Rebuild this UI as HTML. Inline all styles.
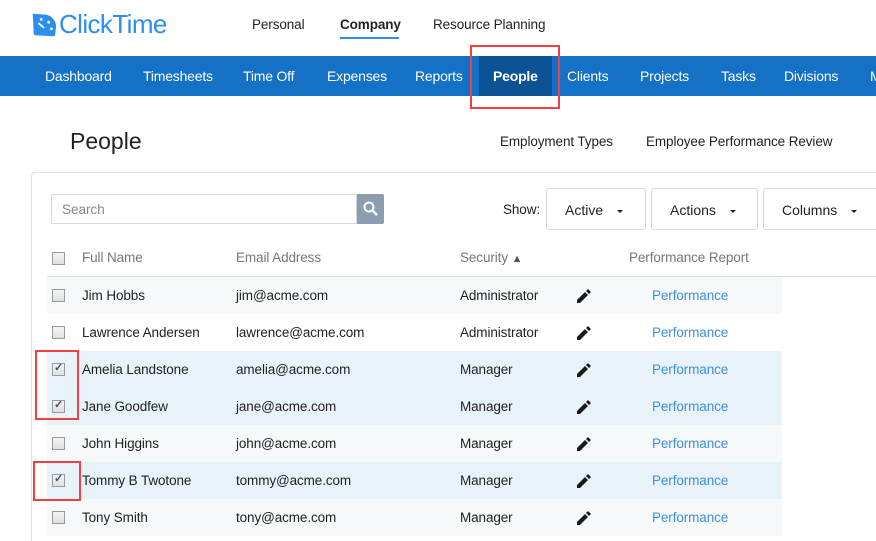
<!DOCTYPE html>
<html><head><meta charset="utf-8"><style>
*{margin:0;padding:0;box-sizing:border-box}
html,body{width:876px;height:541px;overflow:hidden}
body{background:#fff;font-family:"Liberation Sans",sans-serif;color:#222;position:relative}
.a{position:absolute;white-space:nowrap}
.nav{position:absolute;left:0;top:56px;width:876px;height:40px;background:#1471c5;overflow:hidden}
.nav span{position:absolute;top:12px;color:#fff;font-size:14px;letter-spacing:-0.2px}
.row{position:absolute;left:47px;width:735px;height:37px}
.cb{position:absolute;left:52px;width:13px;height:13px;border:1px solid #9a9a9a;background:linear-gradient(#f4f4f4,#e0e0e0)}
.cb.c::after{content:"✓";position:absolute;left:1px;top:-3px;font-size:11px;color:#3a4a9a;font-weight:bold}
.t{font-size:13.5px;color:#222;letter-spacing:-0.1px}
.p{font-size:13.5px;color:#3d8fe0;letter-spacing:-0.1px}
.h{font-size:13.5px;color:#777;letter-spacing:-0.1px}
.btn{position:absolute;top:188px;height:42px;border:1px solid #d5d9dd;border-radius:3px;font-size:14px;color:#222;padding:13px 0 0 18px;overflow:hidden}
.btn i{display:inline-block;border-left:3px solid transparent;border-right:3px solid transparent;border-top:3px solid #222;margin-left:14px;vertical-align:middle}
.red{position:absolute;border:2px solid #ee4242}
.pen{position:absolute;left:576px}
</style></head><body>
<svg class="a" style="left:30px;top:12px" width="28" height="26" viewBox="0 0 30 26"><path d="M3 2 Q2 1 4 1 L18 2 Q27 5 28 14 L27 23 Q27 25 25 25 L6 24 Q4 24 4 22 Z" fill="#2b8ef0"/><circle cx="12" cy="7" r="1.5" fill="#fff"/><circle cx="20" cy="10" r="1.5" fill="#fff"/><circle cx="23" cy="17" r="1.5" fill="#fff"/><path d="M9 11 L15 16" stroke="#fff" stroke-width="2"/></svg>
<div class="a" style="left:59px;top:9px;font-size:26px;color:#2b8ef0;letter-spacing:-0.6px">ClickTime</div>
<div class="a t" style="left:252px;top:17px">Personal</div>
<div class="a t" style="left:340px;top:17px;font-weight:bold">Company</div>
<div class="a" style="left:340px;top:37px;width:59px;height:2px;background:#2d8ee8"></div>
<div class="a t" style="left:433px;top:17px">Resource Planning</div>
<div class="nav">
<div class="a" style="left:479px;top:0;width:73px;height:40px;background:#0b5394"></div>
<span style="left:45px">Dashboard</span><span style="left:143px">Timesheets</span><span style="left:243px">Time Off</span><span style="left:327px">Expenses</span><span style="left:415px">Reports</span><span style="left:493px;font-weight:bold">People</span><span style="left:567px">Clients</span><span style="left:640px">Projects</span><span style="left:721px">Tasks</span><span style="left:784px">Divisions</span><span style="left:870px">M</span>
</div>
<div class="red" style="left:470px;top:45px;width:90px;height:64px"></div>
<div class="a" style="left:70px;top:128px;font-size:23px;color:#222">People</div>
<div class="a t" style="left:500px;top:134px">Employment Types</div>
<div class="a t" style="left:646px;top:134px">Employee Performance Review</div>
<div class="a" style="left:31px;top:172px;width:845px;height:369px;border:1px solid #dde2e6;border-right:none;border-bottom:none;border-radius:4px 0 0 0"></div>
<div class="a" style="left:51px;top:194px;width:306px;height:30px;border:1px solid #d5d9dd;border-radius:2px 0 0 2px"></div>
<div class="a" style="left:62px;top:202px;font-size:13.5px;color:#888">Search</div>
<div class="a" style="left:357px;top:194px;width:27px;height:30px;background:#8c9daf;border-radius:0 2px 2px 0"></div>
<svg class="a" style="left:362px;top:200px" width="17" height="17"><circle cx="7" cy="7" r="4.5" stroke="#fff" stroke-width="2" fill="none"/><path d="M10.5 10.5 L15 15" stroke="#fff" stroke-width="2.5"/></svg>
<div class="a t" style="left:503px;top:202px">Show:</div>
<div class="btn" style="left:546px;width:100px">Active<i></i></div>
<div class="btn" style="left:651px;width:107px">Actions<i></i></div>
<div class="btn" style="left:763px;width:113px;border-right:none;border-radius:3px 0 0 3px">Columns<i></i></div>
<div class="cb" style="top:252px"></div>
<div class="a h" style="left:82px;top:250px">Full Name</div>
<div class="a h" style="left:236px;top:250px">Email Address</div>
<div class="a h" style="left:460px;top:250px">Security <span style="font-size:11px;color:#555">▲</span></div>
<div class="a h" style="left:629px;top:250px">Performance Report</div>
<div class="a" style="left:47px;top:276px;width:829px;height:1px;background:#d9dee2"></div>

<div class="row" style="top:277px;background:#f6f9fa"></div>
<div class="row" style="top:314px;background:#fff"></div>
<div class="row" style="top:351px;background:#e8f3f9"></div>
<div class="row" style="top:388px;background:#e8f3f9"></div>
<div class="row" style="top:425px;background:#f6f9fa"></div>
<div class="row" style="top:462px;background:#e8f3f9"></div>
<div class="row" style="top:499px;background:#f6f9fa"></div>

<svg width="0" height="0" style="position:absolute"><defs><g id="pn"><path d="M1 12 L1 15 L4 15 L12 7 L9 4 Z M10 3 L13 6 L14.5 4.5 Q15 4 14.5 3.5 L12.5 1.5 Q12 1 11.5 1.5 Z" fill="#1a1a1a"/></g></defs></svg>

<div class="cb" style="top:289px"></div><div class="a t" style="left:82px;top:288px">Jim Hobbs</div><div class="a t" style="left:236px;top:288px">jim@acme.com</div><div class="a t" style="left:460px;top:288px">Administrator</div><svg class="pen" style="top:288px" width="16" height="16"><use href="#pn"/></svg><div class="a p" style="left:652px;top:288px">Performance</div>
<div class="cb" style="top:326px"></div><div class="a t" style="left:82px;top:325px">Lawrence Andersen</div><div class="a t" style="left:236px;top:325px">lawrence@acme.com</div><div class="a t" style="left:460px;top:325px">Administrator</div><svg class="pen" style="top:325px" width="16" height="16"><use href="#pn"/></svg><div class="a p" style="left:652px;top:325px">Performance</div>
<div class="cb c" style="top:363px"></div><div class="a t" style="left:82px;top:362px">Amelia Landstone</div><div class="a t" style="left:236px;top:362px">amelia@acme.com</div><div class="a t" style="left:460px;top:362px">Manager</div><svg class="pen" style="top:362px" width="16" height="16"><use href="#pn"/></svg><div class="a p" style="left:652px;top:362px">Performance</div>
<div class="cb c" style="top:400px"></div><div class="a t" style="left:82px;top:399px">Jane Goodfew</div><div class="a t" style="left:236px;top:399px">jane@acme.com</div><div class="a t" style="left:460px;top:399px">Manager</div><svg class="pen" style="top:399px" width="16" height="16"><use href="#pn"/></svg><div class="a p" style="left:652px;top:399px">Performance</div>
<div class="cb" style="top:437px"></div><div class="a t" style="left:82px;top:436px">John Higgins</div><div class="a t" style="left:236px;top:436px">john@acme.com</div><div class="a t" style="left:460px;top:436px">Manager</div><svg class="pen" style="top:436px" width="16" height="16"><use href="#pn"/></svg><div class="a p" style="left:652px;top:436px">Performance</div>
<div class="cb c" style="top:474px"></div><div class="a t" style="left:82px;top:473px">Tommy B Twotone</div><div class="a t" style="left:236px;top:473px">tommy@acme.com</div><div class="a t" style="left:460px;top:473px">Manager</div><svg class="pen" style="top:473px" width="16" height="16"><use href="#pn"/></svg><div class="a p" style="left:652px;top:473px">Performance</div>
<div class="cb" style="top:511px"></div><div class="a t" style="left:82px;top:510px">Tony Smith</div><div class="a t" style="left:236px;top:510px">tony@acme.com</div><div class="a t" style="left:460px;top:510px">Manager</div><svg class="pen" style="top:510px" width="16" height="16"><use href="#pn"/></svg><div class="a p" style="left:652px;top:510px">Performance</div>

<div class="red" style="left:35px;top:350px;width:44px;height:70px"></div>
<div class="red" style="left:33px;top:461px;width:48px;height:40px"></div>
</body></html>
